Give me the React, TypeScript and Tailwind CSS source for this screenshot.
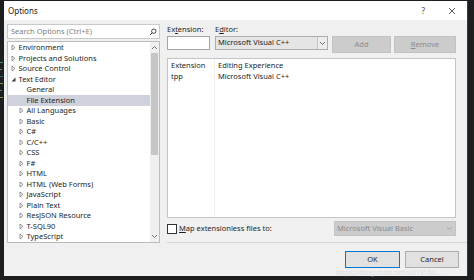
import React from "react";

const F = { fontFamily: '"Noto Sans", "Open Sans", sans-serif' };

type Item = { label: string; level: 0 | 1; kind: "closed" | "open" | "leaf"; selected?: boolean };

const items: Item[] = [
  { label: "Environment", level: 0, kind: "closed" },
  { label: "Projects and Solutions", level: 0, kind: "closed" },
  { label: "Source Control", level: 0, kind: "closed" },
  { label: "Text Editor", level: 0, kind: "open" },
  { label: "General", level: 1, kind: "leaf" },
  { label: "File Extension", level: 1, kind: "leaf", selected: true },
  { label: "All Languages", level: 1, kind: "closed" },
  { label: "Basic", level: 1, kind: "closed" },
  { label: "C#", level: 1, kind: "closed" },
  { label: "C/C++", level: 1, kind: "closed" },
  { label: "CSS", level: 1, kind: "closed" },
  { label: "F#", level: 1, kind: "closed" },
  { label: "HTML", level: 1, kind: "closed" },
  { label: "HTML (Web Forms)", level: 1, kind: "closed" },
  { label: "JavaScript", level: 1, kind: "closed" },
  { label: "Plain Text", level: 1, kind: "closed" },
  { label: "ResJSON Resource", level: 1, kind: "closed" },
  { label: "T-SQL90", level: 1, kind: "closed" },
  { label: "TypeScript", level: 1, kind: "closed" },
];

function Arrow({ kind }: { kind: Item["kind"] }) {
  if (kind === "leaf") return <span className="w-[7px]" />;
  if (kind === "open")
    return (
      <svg width="7" height="7" viewBox="0 0 7 7" className="shrink-0">
        <path d="M5.5 1.5 L5.5 5.5 L1.5 5.5 Z" fill="#3c3c3c" />
      </svg>
    );
  return (
    <svg width="7" height="7" viewBox="0 0 7 7" className="shrink-0">
      <path d="M2 1 L5 3.5 L2 6 Z" fill="none" stroke="#7a7a7a" strokeWidth="0.8" />
    </svg>
  );
}

function Chevron({ color = "#606060" }: { color?: string }) {
  return (
    <svg width="7" height="5" viewBox="0 0 7 5">
      <path d="M1 1 L3.5 3.5 L6 1" fill="none" stroke={color} strokeWidth="0.9" />
    </svg>
  );
}

export default function App() {
  return (
    <div className="w-[474px] h-[280px] bg-[#1c1e1f] overflow-hidden relative text-[7.5px] text-[#1e1e1e]" style={F}>
      <div className="absolute left-0 top-[60px] w-[3px] h-[200px] flex flex-col gap-[6px] pt-[2px]">
        <div className="h-[1px] w-[3px] bg-[#4a8a5a]" />
        <div className="h-[1px] w-[2px] bg-[#6a9955]" />
        <div className="h-[1px] w-[3px] bg-[#3a6a7a]" />
        <div className="h-[1px] w-[3px] bg-[#6a9955]" />
        <div className="h-[1px] w-[2px] bg-[#4a7a8a]" />
        <div className="h-[1px] w-[3px] bg-[#6a9955]" />
      </div>
      <div className="ml-[4px] mt-[1px] w-[464px] h-[275px] flex flex-col bg-[#f0f0f0] border-r border-[#3a3a3a]">
        {/* Title bar */}
        <div className="h-[19px] bg-white flex items-center shrink-0">
          <span className="ml-[4px] text-[8px] text-[#1a1a1a]">Options</span>
          <span className="ml-auto mr-[23px] text-[8px] text-[#444]">?</span>
          <svg width="8" height="8" viewBox="0 0 8 8" className="mr-[11px]">
            <path d="M1 1 L7 7 M7 1 L1 7" stroke="#333" strokeWidth="0.8" />
          </svg>
        </div>
        <div className="flex flex-1">
          {/* Left column */}
          <div className="ml-[3px] w-[153px] flex flex-col">
            <div className="mt-[4px] h-[15px] bg-white border border-[#c9c9c9] flex items-center pl-[3px] pr-[2px]">
              <span className="text-[#7d7d7d]">Search Options (Ctrl+E)</span>
              <svg width="8" height="8" viewBox="0 0 8 8" className="ml-auto">
                <circle cx="4.8" cy="3.2" r="2.2" fill="none" stroke="#333" strokeWidth="0.9" />
                <path d="M3.2 4.8 L1 7" stroke="#333" strokeWidth="1" />
              </svg>
            </div>
            <div className="mt-[2px] h-[202px] bg-white border border-[#bcbcbc] flex">
              <div className="flex-1 flex flex-col pt-[0.5px]">
                {items.map((it) => (
                  <div
                    key={it.label}
                    className={`h-[10.5px] flex items-center leading-none ${it.selected ? "bg-[#cfd1dc]" : ""}`}
                  >
                    <div className={`flex items-center ${it.level === 0 ? "pl-[2px]" : "pl-[10px]"}`}>
                      <Arrow kind={it.kind} />
                      <span className="ml-[1.5px] whitespace-nowrap">{it.label}</span>
                    </div>
                  </div>
                ))}
              </div>
              <div className="w-[9px] flex flex-col bg-[#f0f0f0]">
                <div className="h-[11px] flex items-center justify-center">
                  <svg width="7" height="5" viewBox="0 0 7 5">
                    <path d="M1 4 L3.5 1.5 L6 4" fill="none" stroke="#606060" strokeWidth="0.9" />
                  </svg>
                </div>
                <div className="mx-[1px] h-[102px] bg-[#c6c6c6]" />
                <div className="flex-1" />
                <div className="h-[11px] flex items-center justify-center">
                  <Chevron />
                </div>
              </div>
            </div>
          </div>
          {/* Right column */}
          <div className="ml-[7px] flex-1 flex flex-col">
            <div className="w-[289px] flex flex-col">
              <div className="mt-[5px] h-[10px] flex items-center">
                <span className="w-[48px]">
                  Ex<span className="underline">t</span>ension:
                </span>
                <span>
                  E<span className="underline">d</span>itor:
                </span>
              </div>
              <div className="mt-[1px] flex items-start">
                <div className="w-[43px] h-[14px] bg-white border border-[#a5a5a5]" />
                <div className="ml-[5px] w-[113px] h-[14px] flex border border-[#adadad] bg-[#e5e5e5]">
                  <div className="flex-1 flex items-center pl-[2px]">Microsoft Visual C++</div>
                  <div className="w-[10px] flex items-center justify-center border-l border-[#c4c4c4] bg-[#ececec]">
                    <Chevron />
                  </div>
                </div>
                <div className="ml-[4px] w-[59px] h-[17px] flex items-center justify-center bg-[#cccccc] border border-[#c2c2c2] text-[#8b8b8b]">
                  Add
                </div>
                <div className="ml-[3px] w-[62px] h-[17px] flex items-center justify-center bg-[#cccccc] border border-[#c2c2c2] text-[#8b8b8b]">
                  <span>
                    <span className="underline">R</span>emove
                  </span>
                </div>
              </div>
              <div className="mt-[5px] h-[160px] bg-white border border-[#c4c4c4] flex">
                <div className="w-[47px] border-r border-[#efefef] flex flex-col pl-[3px] pt-[1.5px]">
                  <div className="h-[11px] flex items-center">Extension</div>
                  <div className="h-[11px] flex items-center">tpp</div>
                </div>
                <div className="flex-1 flex flex-col pl-[3px] pt-[1.5px]">
                  <div className="h-[11px] flex items-center">Editing Experience</div>
                  <div className="h-[11px] flex items-center">Microsoft Visual C++</div>
                </div>
              </div>
              <div className="mt-[3px] h-[15px] flex items-center">
                <div className="w-[10px] h-[10px] bg-white border border-[#333]" />
                <span className="ml-[2px]">
                  <span className="underline">M</span>ap extensionless files to:
                </span>
                <div className="ml-auto w-[122px] h-[15px] flex items-center bg-[#cccccc] border border-[#c4c4c4] text-[#8a8a8a] pl-[2px] pr-[2px]">
                  <span>Microsoft Visual Basic</span>
                  <span className="ml-auto">
                    <Chevron color="#a0a0a0" />
                  </span>
                </div>
              </div>
            </div>
            <div className="mt-[6px] h-[1px] bg-[#d6d6d6]" />
            <div className="mt-[8px] flex">
              <div className="ml-[178px] w-[55px] h-[17px] flex items-center justify-center bg-[#e1e1e1] border border-[#0078d7]">
                OK
              </div>
              <div className="ml-[5px] w-[54px] h-[17px] flex items-center justify-center bg-[#e1e1e1] border border-[#adadad]">
                Cancel
              </div>
            </div>
          </div>
        </div>
      </div>
      <div className="absolute left-[336px] top-[268px] text-[7px] text-[#b8c4d0] opacity-40 whitespace-nowrap">
        https://blog.csdn.net/u013163...
      </div>
    </div>
  );
}
